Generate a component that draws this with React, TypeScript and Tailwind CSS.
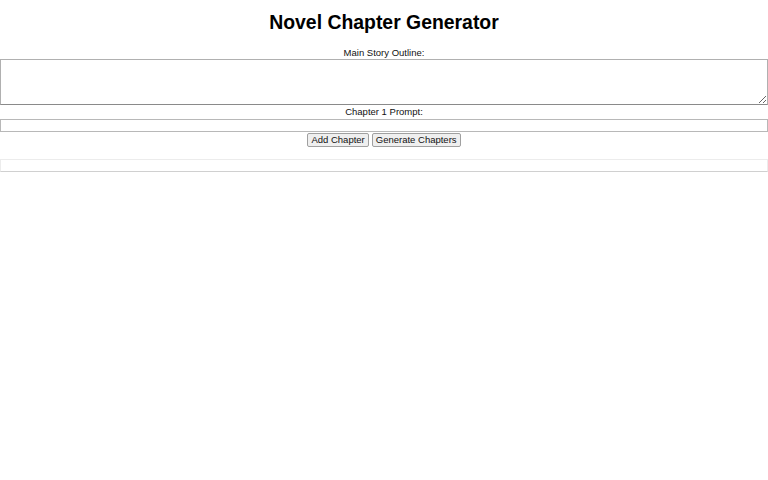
import React, { useState } from 'react';

export default function App() {
  const [outline, setOutline] = useState('');
  const [prompts, setPrompts] = useState<string[]>(['']);

  const addChapter = () => setPrompts((p) => [...p, '']);

  return (
    <div className="min-h-screen bg-white text-center text-[9.5px] text-[#111] font-['Liberation_Sans',Arial,sans-serif]">
      <h1 className="mt-[11px] mb-[13px] text-[19.4px] leading-[23px] font-bold text-black">Novel Chapter Generator</h1>

      <label className="block leading-[12px]">Main Story Outline:</label>
      <textarea
        value={outline}
        onChange={(e) => setOutline(e.target.value)}
        className="block w-full h-[46px] border border-[#b0b0b0] border-b-[#8a8a8a] bg-white outline-none"
      />

      {prompts.map((text, i) => (
        <div key={i}>
          <label className="block leading-[14px]">Chapter {i + 1} Prompt:</label>
          <input
            value={text}
            onChange={(e) => setPrompts((p) => p.map((v, j) => (j === i ? e.target.value : v)))}
            className="block w-full h-[13px] border border-[#b8b8b8] bg-white outline-none"
          />
        </div>
      ))}

      <div className="mt-[1px] flex justify-center gap-[3px]">
        <button
          onClick={addChapter}
          className="h-[14px] px-[3px] leading-[12px] bg-[#efefef] border border-[#a0a0a0] rounded-[2px]"
        >
          Add Chapter
        </button>
        <button className="h-[14px] px-[3px] leading-[12px] bg-[#efefef] border border-[#a0a0a0] rounded-[2px]">
          Generate Chapters
        </button>
      </div>

      <div className="mt-[12px] h-[13px] border border-[#ececec] border-b-[#d0d0d0]" />
    </div>
  );
}
